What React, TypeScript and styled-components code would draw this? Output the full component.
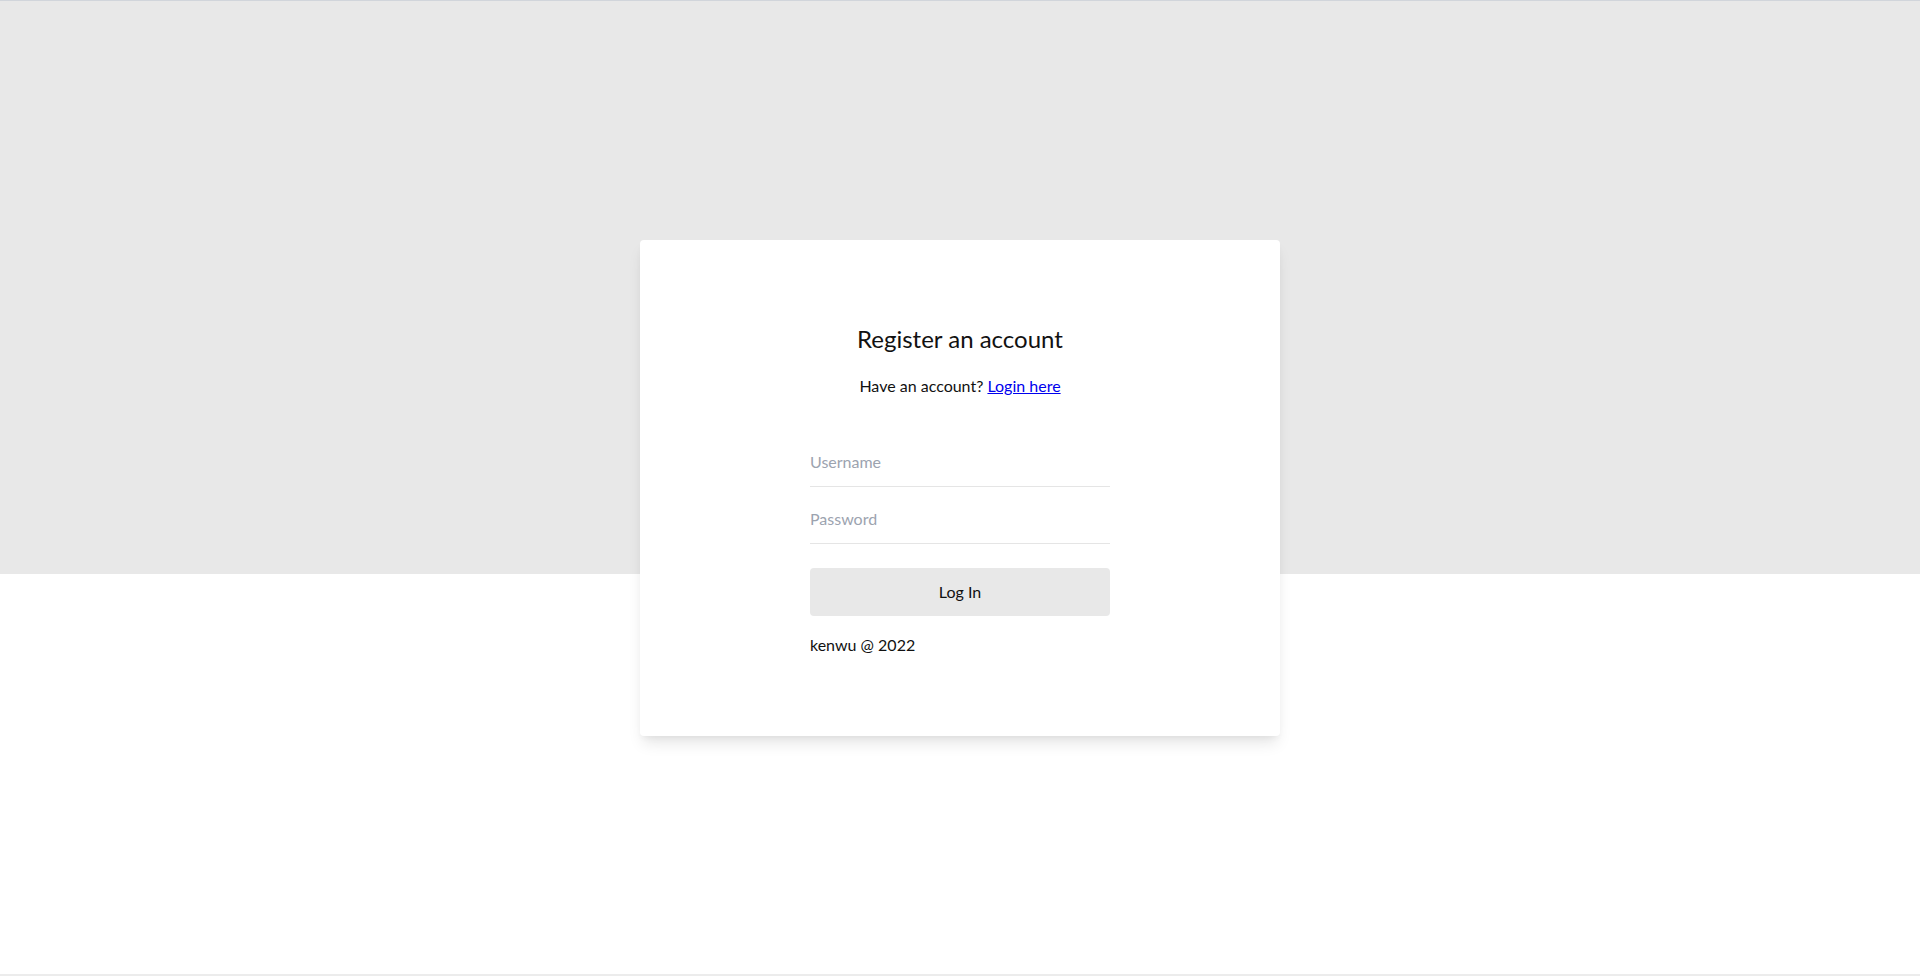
import React from 'react';
import styled, { createGlobalStyle } from 'styled-components';

const GlobalStyle = createGlobalStyle`
  html, body {
    margin: 0;
    padding: 0;
  }
  body {
    font-family: Lato, "Noto Sans", sans-serif;
    color: #111;
    background-color: #fff;
  }
  * {
    box-sizing: border-box;
  }
`;

const Page = styled.div`
  min-height: 100vh;
  display: flex;
  flex-direction: column;
  position: relative;
`;

const Backdrop = styled.div`
  height: 574px;
  background-color: #e8e8e8;
  border-top: 1px solid #d1d5db;
  display: flex;
  justify-content: center;
  padding-top: 239px;
`;

const Card = styled.div`
  width: 640px;
  height: 496px;
  background-color: #fff;
  border-radius: 4px;
  box-shadow: 0 10px 15px -3px rgba(0, 0, 0, 0.1), 0 4px 6px -2px rgba(0, 0, 0, 0.05);
  display: flex;
  flex-direction: column;
  align-items: center;
  padding: 83px 0 0;
`;

const Title = styled.h1`
  margin: 0;
  font-size: 24px;
  line-height: 32px;
  font-weight: 400;
`;

const Subtitle = styled.p`
  margin: 19px 0 0;
  font-size: 16px;
  line-height: 24px;
`;

const Link = styled.a`
  color: #0000ee;
  text-decoration: underline;
`;

const Form = styled.form`
  width: 300px;
  margin-top: 47px;
  display: flex;
  flex-direction: column;
`;

const Input = styled.input<{ spaced? : boolean }>`
  height: 42px;
  margin-top: ${p => p.spaced ? '15px' : '0'};
  border: none;
  border-bottom: 1px solid #e5e5e5;
  padding: 0 0 9px;
  font-family: inherit;
  font-size: 16px;
  color: #111;
  background: transparent;
  outline: none;

  &::placeholder {
    color: #9ca3af;
  }
`;

const Button = styled.button`
  margin-top: 24px;
  height: 48px;
  border: none;
  border-radius: 4px;
  background-color: #e8e8e8;
  font-family: inherit;
  font-size: 16px;
  color: #111;
  padding: 0 0 2px;
  cursor: pointer;
`;

const Footer = styled.p`
  margin: 17px 0 0;
  font-size: 16px;
  line-height: 24px;
`;

const Strip = styled.div`
  position: absolute;
  left: 0;
  right: 0;
  bottom: 0;
  height: 2px;
  background-color: #ececec;
`;

const App = () => (
  <>
    <GlobalStyle />
    <Page>
      <Backdrop>
        <Card>
          <Title>Register an account</Title>
          <Subtitle>
            Have an account? <Link href="#">Login here</Link>
          </Subtitle>
          <Form onSubmit={e => e.preventDefault()}>
            <Input type="text" placeholder="Username" />
            <Input type="password" placeholder="Password" spaced />
            <Button type="submit">Log In</Button>
            <Footer>kenwu @ 2022</Footer>
          </Form>
        </Card>
      </Backdrop>
      <Strip />
    </Page>
  </>
);

export default App;
